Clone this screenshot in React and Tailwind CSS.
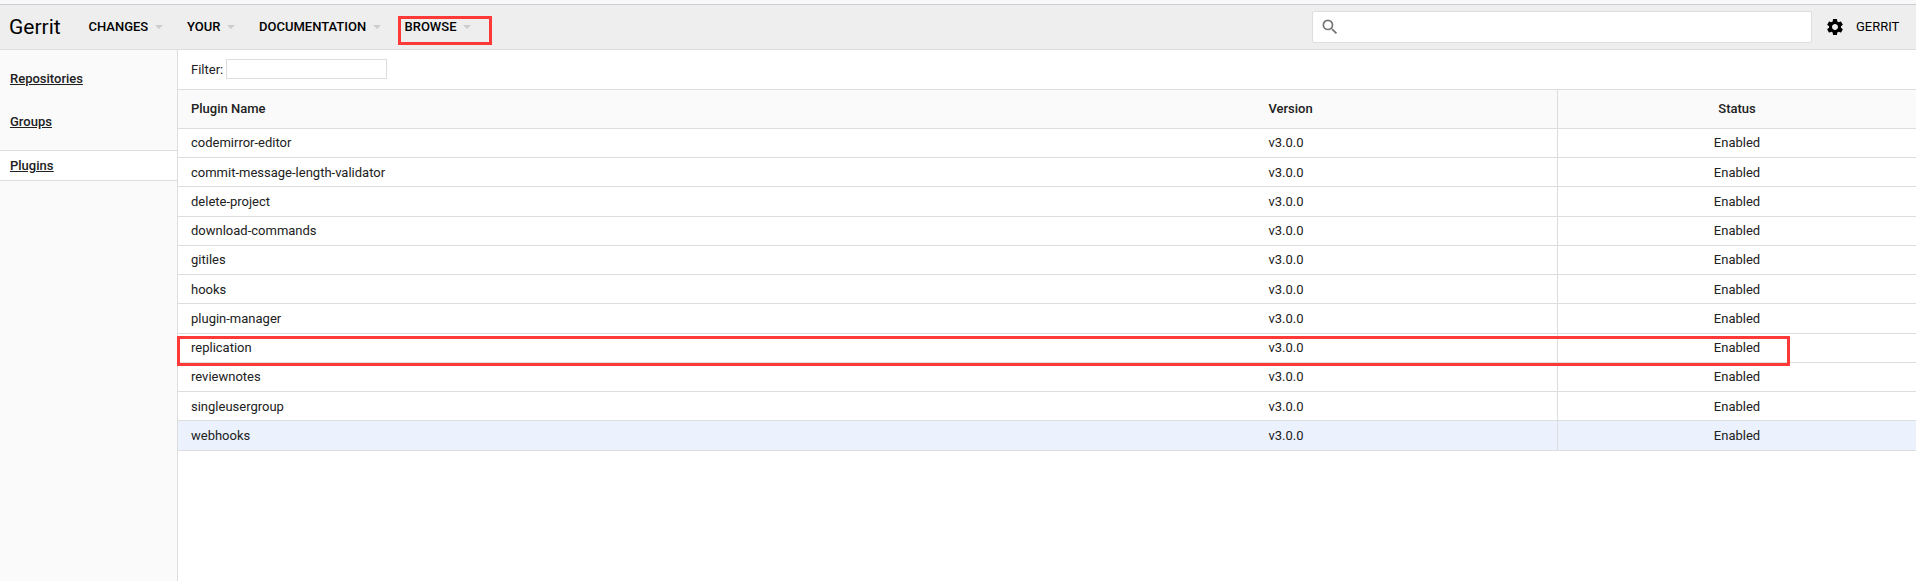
import clsx from 'clsx'
import { MdSearch, MdSettings } from 'react-icons/md'

const MENUS = [
  { label: 'CHANGES', width: 'w-[98.5px]' },
  { label: 'YOUR', width: 'w-[72px]' },
  { label: 'DOCUMENTATION', width: 'w-[145.5px]' },
  { label: 'BROWSE', width: 'w-[66px]', marked: true },
]

const PLUGINS = [
  'codemirror-editor',
  'commit-message-length-validator',
  'delete-project',
  'download-commands',
  'gitiles',
  'hooks',
  'plugin-manager',
  'replication',
  'reviewnotes',
  'singleusergroup',
  'webhooks',
]

function MenuItem({ label, width, marked }) {
  return (
    <li className={clsx('relative flex h-11 shrink-0 items-center', width)}>
      <button type="button" className="font-medium text-black">
        {label}
      </button>
      <span className="ml-[6.5px] h-0 w-0 border-x-4 border-t-4 border-x-transparent border-t-[#ccc]" />
      {marked && <span className="absolute -left-[6.5px] top-[11px] h-[29px] w-[94px] border-3 border-[#ff3838]" />}
    </li>
  )
}

function Header() {
  return (
    <header className="flex h-[46px] items-center border-t border-b border-t-[#ccc] border-b-[#ddd] bg-[#eee] pl-[9px]">
      <h1 className="w-[79.5px] text-[21px] leading-none text-black">Gerrit</h1>
      <ul className="flex">
        {MENUS.map((menu) => (
          <MenuItem key={menu.label} {...menu} />
        ))}
      </ul>
      <div className="ml-auto flex h-8 w-[500px] items-center rounded-xs border border-[#ddd] bg-white pl-[7px]">
        <MdSearch size={20} className="text-[#757575]" />
      </div>
      <MdSettings size={20} className="ml-[13px] text-black" />
      <span className="ml-[11px] w-[60px] text-black">GERRIT</span>
    </header>
  )
}

function Sidebar() {
  return (
    <nav className="w-[178px] shrink-0 border-r border-[#ddd] bg-[#fafafa] pt-[14px] font-medium underline">
      <a className="flex h-[30px] items-center pl-2.5">Repositories</a>
      <a className="mt-[13px] flex h-[30px] items-center pl-2.5">Groups</a>
      <a className="mt-[13px] flex h-[31px] items-center border-y border-[#ddd] bg-white pl-2.5">Plugins</a>
    </nav>
  )
}

function Row({ name, version, status, className }) {
  return (
    <div className={clsx('flex border-b border-[#ddd]', className)}>
      <span className="flex flex-1 items-center pl-[13px]">{name}</span>
      <span className="flex w-[290px] items-center border-r border-[#ddd] pl-[0.4px]">{version}</span>
      <span className="flex w-[358px] items-center justify-center">{status}</span>
    </div>
  )
}

export default function App() {
  return (
    <div className="flex h-[581px] w-[1916px] flex-col overflow-hidden bg-white font-['Roboto',sans-serif] text-[13px] text-[#212121]">
      <div className="h-1 shrink-0 bg-[#f8f8fa]" />
      <Header />
      <div className="flex flex-1">
        <Sidebar />
        <main className="relative flex-1">
          <div className="flex h-10 items-center border-b border-[#ddd] pl-[13px]">
            <label htmlFor="filter">Filter:</label>
            <input id="filter" className="mb-px ml-[3px] h-5 w-[161px] border border-[#ddd] bg-white outline-none" />
          </div>
          <Row name="Plugin Name" version="Version" status="Status" className="h-[38.9px] bg-[#fafafa] font-medium" />
          {PLUGINS.map((name) => (
            <Row
              key={name}
              name={name}
              version="v3.0.0"
              status="Enabled"
              className={clsx('h-[29.25px]', name === 'webhooks' && 'bg-[#ebf2fe]')}
            />
          ))}
          <div className="absolute top-[286px] -left-px h-[30px] w-[1613px] border-3 border-[#ff3838]" />
        </main>
      </div>
    </div>
  )
}
